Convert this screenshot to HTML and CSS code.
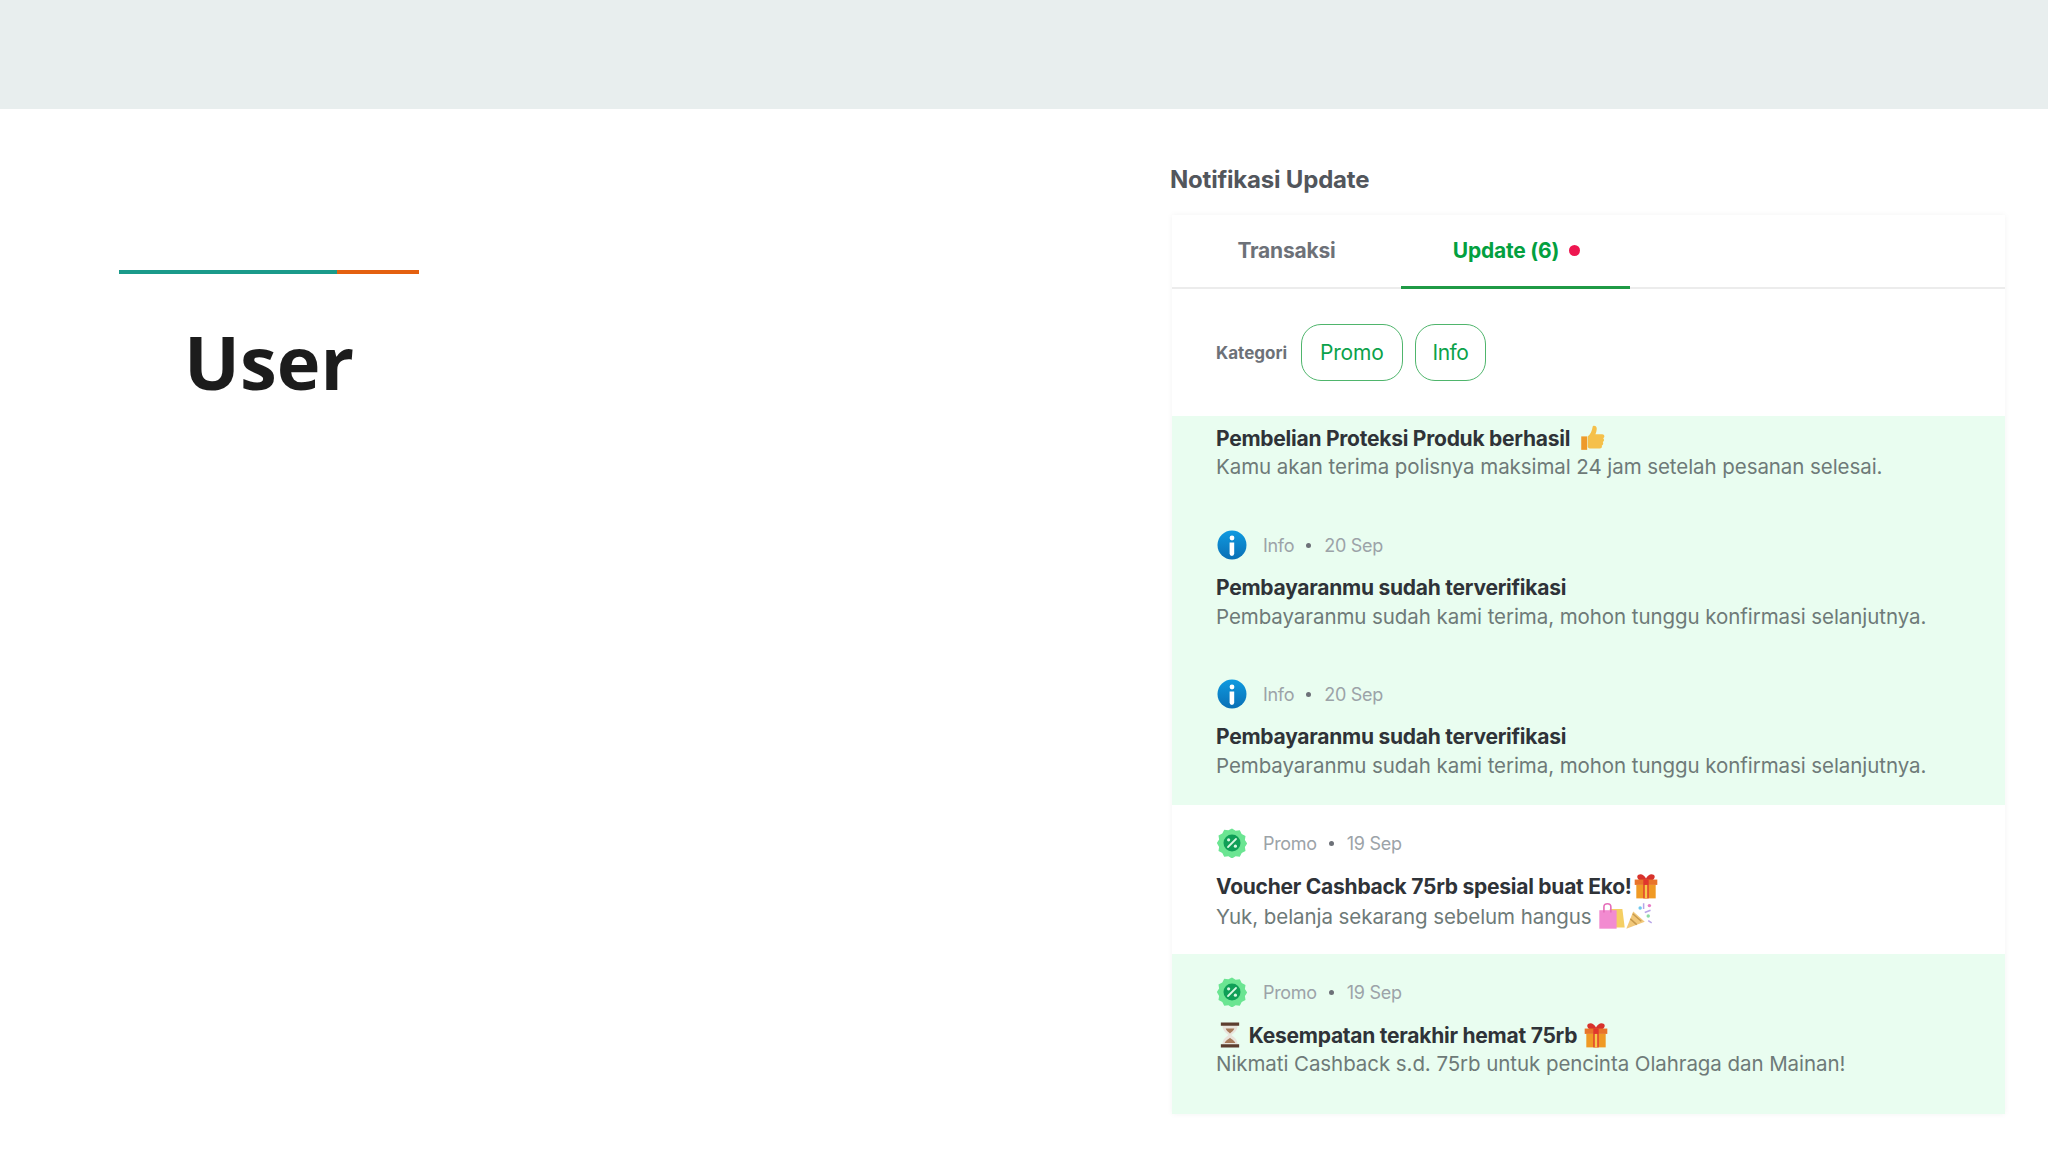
FILE: index.html
```html
<!DOCTYPE html>
<html lang="en">
<head>
  <meta charset="UTF-8">
  <title>User - Notifikasi Update</title>
  <link rel="stylesheet" href="styles.css">
</head>
<body>

  <svg class="defs" width="0" height="0">
    <defs>
      <linearGradient id="blue" x1="0" y1="0" x2="0" y2="1">
        <stop offset="0" stop-color="#0f9ae0"/>
        <stop offset="1" stop-color="#0a6fb5"/>
      </linearGradient>
      <symbol id="icon-info" viewBox="0 0 30 30">
        <circle cx="15" cy="15" r="14.5" fill="url(#blue)"/>
        <circle cx="15" cy="8" r="2.4" fill="#fff"/>
        <path d="M12.6 12.4h4.6v11.2a2.3 2.3 0 0 1-4.6 0z" fill="#fff"/>
      </symbol>
      <symbol id="icon-promo" viewBox="0 0 30 30">
        <path d="M15 .5l3.6 2.3 4.2-.6 1.9 3.8 3.8 1.9-.6 4.2 2.3 3.4-2.3 3.4.6 4.2-3.8 1.9-1.9 3.8-4.2-.6-3.6 2.3-3.6-2.3-4.2.6-1.9-3.8-3.8-1.9.6-4.2L-.2 15l2.3-3.4-.6-4.2 3.8-1.9 1.9-3.8 4.2.6z" fill="#6be592"/>
        <circle cx="15" cy="15" r="8.500" fill="#0f9f57"/>
        <path d="M19 11l-8 8" stroke="#d8f7e2" stroke-width="1.8" stroke-linecap="round"/>
        <circle cx="11.6" cy="11.8" r="1.6" fill="#d8f7e2"/>
        <circle cx="18.4" cy="18.2" r="1.6" fill="#d8f7e2"/>
      </symbol>
      <symbol id="emoji-thumb" viewBox="0 0 26 26">
        <path d="M9 11.500c2.500-2 4-5 4.600-9 .2-1.500 3.600-1.300 3.800 1.400.1 2-.6 4-1.200 5.600h6.300c2.300 0 2.600 3 .9 3.700 1.200 1 1 3-.4 3.500.8 1.200.4 2.900-.9 3.200.5 1.400-.3 2.900-2 2.900H12c-1.500 0-2.300-.7-3-1.300z" fill="#f5c04a"/>
        <path d="M3 11.500h5.500V24H3z" fill="#ee9a2a"/>
      </symbol>
      <symbol id="emoji-gift" viewBox="0 0 26 26">
        <path d="M6 2.500c2.500-1.500 5.500.5 7 3.500 1.500-3 4.500-5 7-3.500 2 1.300 1 4-1 5H7c-2-1-3-3.700-1-5z" fill="#d8322c"/>
        <path d="M2.500 7h21v5h-21z" fill="#e8742a"/>
        <path d="M4 12h18v12.500H4z" fill="#f09a24"/>
        <path d="M10.500 7h5v17.500h-5z" fill="#e0362c"/>
        <path d="M11.800 12h2.400v12.500h-2.400z" fill="#f6c94a"/>
      </symbol>
      <symbol id="emoji-bags" viewBox="0 0 26 26">
        <path d="M11 7h11l2 16H11z" fill="#f5cf63"/>
        <path d="M2 8h15v16H2z" fill="#f28bd0"/>
        <path d="M6 10V5c0-3.500 6-3.500 6 0v5" fill="none" stroke="#e56db9" stroke-width="1.400"/>
      </symbol>
      <symbol id="emoji-party" viewBox="0 0 26 26">
        <path d="M2 24l6-15 10 9z" fill="#f2c879"/>
        <path d="M5.500 15.500l5.500 5M7.500 11l7.500 6.500" stroke="#c79a4d" stroke-width="1.300"/>
        <circle cx="14" cy="6" r="1.500" fill="#6fc8ee"/>
        <circle cx="22" cy="4" r="1.500" fill="#e87cc6"/>
        <circle cx="21" cy="13" r="1.500" fill="#8ddba5"/>
        <path d="M17 2v5M18 10l5-2M21 17l3 2" stroke="#b9a6e8" stroke-width="1.300"/>
      </symbol>
      <symbol id="emoji-hourglass" viewBox="0 0 26 26">
        <path d="M6 4h14c0 6-4 7-5.500 9C16 15 20 16 20 22H6c0-6 4-7 5.500-9C10 11 6 10 6 4z" fill="#e9e4dc"/>
        <path d="M8 20.500c1-3 4-3.500 5-5 1 1.500 4 2 5 5zM9 7h8c-.5 2-2.500 3-4 4.500C11.500 10 9.500 9 9 7z" fill="#a87b5b"/>
        <path d="M4.500 1.500h17v3h-17zM4.500 21.500h17v3h-17z" fill="#5c3d2e"/>
      </symbol>
    </defs>
  </svg>

  <div class="top-band"></div>

  <main class="content">
    <section class="intro">
      <div class="accent"><span class="accent-teal"></span><span class="accent-orange"></span></div>
      <h1>User</h1>
    </section>

    <section class="notif-col">
      <h2 class="notif-heading">Notifikasi Update</h2>
      <div class="panel">
        <div class="tabs">
          <div class="tab">Transaksi</div>
          <div class="tab tab-active">Update (6)<span class="red-dot"></span></div>
        </div>
        <div class="filters">
          <span class="filter-label">Kategori</span>
          <span class="pill">Promo</span>
          <span class="pill pill-info">Info</span>
        </div>

        <div class="notif notif-unread notif-first">
          <div class="notif-title">Pembelian Proteksi Produk berhasil <svg class="emoji emoji-thumb"><use href="#emoji-thumb"/></svg></div>
          <div class="notif-body">Kamu akan terima polisnya maksimal 24 jam setelah pesanan selesai.</div>
        </div>

        <div class="notif notif-unread">
          <div class="notif-meta"><svg class="meta-icon"><use href="#icon-info"/></svg>Info<span class="sep"></span>20 Sep</div>
          <div class="notif-title">Pembayaranmu sudah terverifikasi</div>
          <div class="notif-body">Pembayaranmu sudah kami terima, mohon tunggu konfirmasi selanjutnya.</div>
        </div>

        <div class="notif notif-unread">
          <div class="notif-meta"><svg class="meta-icon"><use href="#icon-info"/></svg>Info<span class="sep"></span>20 Sep</div>
          <div class="notif-title">Pembayaranmu sudah terverifikasi</div>
          <div class="notif-body">Pembayaranmu sudah kami terima, mohon tunggu konfirmasi selanjutnya.</div>
        </div>

        <div class="notif">
          <div class="notif-meta"><svg class="meta-icon"><use href="#icon-promo"/></svg>Promo<span class="sep"></span>19 Sep</div>
          <div class="notif-title">Voucher Cashback 75rb spesial buat Eko!<svg class="emoji"><use href="#emoji-gift"/></svg></div>
          <div class="notif-body">Yuk, belanja sekarang sebelum hangus <svg class="emoji emoji-wide"><use href="#emoji-bags"/></svg><svg class="emoji emoji-wide"><use href="#emoji-party"/></svg></div>
        </div>

        <div class="notif notif-unread notif-last">
          <div class="notif-meta"><svg class="meta-icon"><use href="#icon-promo"/></svg>Promo<span class="sep"></span>19 Sep</div>
          <div class="notif-title"><svg class="emoji"><use href="#emoji-hourglass"/></svg> Kesempatan terakhir hemat 75rb <svg class="emoji"><use href="#emoji-gift"/></svg></div>
          <div class="notif-body">Nikmati Cashback s.d. 75rb untuk pencinta Olahraga dan Mainan!</div>
        </div>
      </div>
    </section>
  </main>

</body>
</html>
```

FILE: styles.css
```css
body {
  margin: 0;
  height: 1152px;
  overflow: hidden;
  background-color: #fff;
  font-family: Inter, "Noto Sans", sans-serif;
  color: #31353b;
}

.defs {
  display: block;
  height: 0;
}

.top-band {
  height: 109px;
  background-color: #e8eeee;
}

.content {
  display: flex;
  justify-content: space-between;
  padding: 0 43px 0 119px;
}

/* left title block */
.intro {
  width: 300px;
  padding-top: 161px;
}

.accent {
  display: flex;
  height: 4px;
}

.accent-teal {
  width: 218px;
  background-color: #1a9a8a;
}

.accent-orange {
  flex: 1;
  background-color: #e4600f;
}

h1 {
  margin: 38px 0 0;
  text-align: center;
  font-family: "Open Sans", sans-serif;
  font-size: 74px;
  line-height: 100px;
  font-weight: 700;
  color: #1c1c1c;
}

/* notification column */
.notif-col {
  width: 833px;
}

.notif-heading {
  margin: 56px 0 0 -2px;
  font-size: 24px;
  line-height: 30px;
  font-weight: 700;
  color: #52565c;
  letter-spacing: -0.2px;
}

.panel {
  margin-top: 20px;
  box-shadow: 0 0 6px rgba(0, 0, 0, 0.05);
}

.tabs {
  display: flex;
  height: 74px;
  border-bottom: 2px solid #ececec;
  box-sizing: border-box;
}

.tab {
  width: 229px;
  height: 74px;
  box-sizing: border-box;
  padding-bottom: 3px;
  display: flex;
  align-items: center;
  justify-content: center;
  font-size: 21px;
  font-weight: 700;
  color: #6d7178;
  letter-spacing: -0.2px;
}

.tab-active {
  color: #03a03f;
  border-bottom: 3px solid #1f9a45;
  padding: 0 0 1px 2px;
}

.red-dot {
  width: 11px;
  height: 11px;
  margin-left: 10px;
  border-radius: 50%;
  background-color: #ee1650;
}

.filters {
  display: flex;
  align-items: center;
  height: 127px;
  padding-left: 44px;
}

.filter-label {
  width: 85px;
  font-size: 17px;
  font-weight: 700;
  color: #6d7178;
}

.pill {
  height: 57px;
  box-sizing: border-box;
  display: flex;
  align-items: center;
  padding: 0 18px;
  margin-right: 12px;
  border: 1.5px solid #4fb56c;
  border-radius: 20px;
  font-size: 21px;
  color: #0ba24a;
  letter-spacing: -0.2px;
}

.pill-info {
  padding: 0 17px;
  letter-spacing: -0.5px;
}

.notif {
  padding: 23px 20px 25px 44px;
}

.notif-unread {
  background-color: #e9fdf0;
}

.notif-first {
  padding-top: 8px;
  padding-bottom: 26px;
}

.notif-last {
  padding-bottom: 36px;
}

.notif-meta {
  display: flex;
  align-items: center;
  height: 30px;
  margin-bottom: 14px;
  font-size: 18px;
  color: #9ca3a8;
  letter-spacing: -0.3px;
}

.meta-icon {
  width: 30px;
  height: 30px;
  margin: 0 16px 0 1px;
  flex: none;
}

.sep {
  width: 5px;
  height: 5px;
  margin: 0 13px 0 12px;
  border-radius: 50%;
  background-color: #6d7178;
}

.notif-title {
  height: 28px;
  line-height: 28px;
  font-size: 21px;
  font-weight: 700;
  color: #2f3338;
  letter-spacing: -0.25px;
  white-space: nowrap;
}

.notif-body {
  height: 28px;
  margin-top: 1px;
  line-height: 28px;
  font-size: 20.5px;
  color: #6e7a78;
  letter-spacing: -0.07px;
  white-space: nowrap;
}

.emoji {
  width: 28px;
  height: 28px;
  vertical-align: -6px;
}

.emoji-thumb {
  margin-left: 3px;
}

.emoji-wide {
  width: 30px;
  height: 30px;
  vertical-align: -7px;
  margin-right: -3px;
}
```
